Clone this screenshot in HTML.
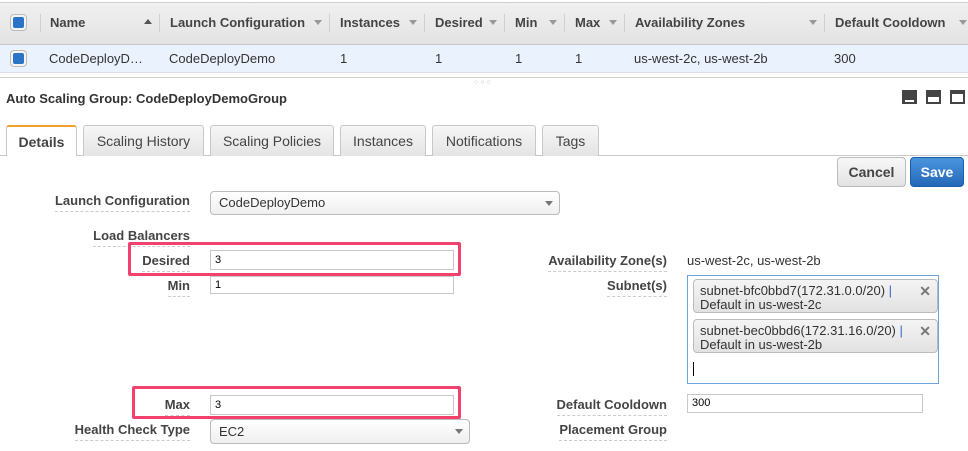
<!DOCTYPE html>
<html><head><style>
*{box-sizing:border-box;margin:0;padding:0}
body{width:968px;height:451px;overflow:hidden;background:#fff;font-family:"Liberation Sans",Arial,sans-serif;color:#333;position:relative;font-size:13px}
.a{position:absolute;white-space:nowrap}
.h{font-weight:bold;color:#444;font-size:13px;top:15px}
.sep{position:absolute;top:14px;width:1px;height:18px;background:#d0d0d0}
.arr{position:absolute;top:20px;width:0;height:0;border-left:4px solid transparent;border-right:4px solid transparent;border-top:5px solid #999}
.cb{position:absolute;width:17px;height:17px;border:1px solid #bbb;border-radius:4px;background:#f4f4f4}
.cb i{position:absolute;left:2px;top:2px;width:11px;height:11px;border-radius:2px;background:#2a73c7}
.tab{position:absolute;top:125px;height:31px;border:1px solid #c8c8c8;border-bottom:none;border-radius:3px 3px 0 0;background:linear-gradient(#f6f6f6,#e4e4e4);font-size:14px;color:#444;text-align:center;line-height:30px}
.lb{position:absolute;font-weight:bold;font-size:13px;color:#444;text-align:right;border-bottom:1px dashed #ccc;padding-bottom:3px}
.in{position:absolute;border:1px solid #c8c8c8;background:#fff;font-size:11px;padding-left:4px;color:#000}
.sel{position:absolute;border:1px solid #bbb;border-radius:4px;background:linear-gradient(#fff,#efefef);font-size:13px;padding-left:8px;color:#333}
.sel:after{content:"";position:absolute;right:6px;top:9px;border-left:4px solid transparent;border-right:4px solid transparent;border-top:5px solid #777}
.pink{position:absolute;border:3px solid #f2416f;border-radius:2px}
.tok{position:absolute;left:5px;width:245px;height:34px;border:1px solid #bbb;border-radius:4px;background:linear-gradient(#f4f4f4,#e2e2e2);font-size:13px;line-height:14px;padding:4px 0 0 6px;color:#333}
.tok b{position:absolute;right:6px;top:4px;color:#777;font-size:14px}
</style></head><body>
<div class="a" style="left:0;top:2px;width:968px;height:43px;background:linear-gradient(#f0f0f0,#e3e3e3);border-top:1px solid #ccc;border-bottom:1px solid #c8c8c8"></div>
<div class="cb" style="left:10px;top:14px"><i></i></div>
<div class="sep" style="left:40px"></div>
<div class="a h" style="left:50px">Name</div>
<div class="a" style="left:144px;top:19px;border-left:4px solid transparent;border-right:4px solid transparent;border-bottom:5px solid #555"></div>
<div class="sep" style="left:159px"></div>
<div class="a h" style="left:170px">Launch Configuration</div><div class="arr" style="left:314px"></div>
<div class="sep" style="left:329px"></div>
<div class="a h" style="left:340px">Instances</div><div class="arr" style="left:409px"></div>
<div class="sep" style="left:424px"></div>
<div class="a h" style="left:435px">Desired</div><div class="arr" style="left:489px"></div>
<div class="sep" style="left:504px"></div>
<div class="a h" style="left:515px">Min</div><div class="arr" style="left:549px"></div>
<div class="sep" style="left:564px"></div>
<div class="a h" style="left:575px">Max</div><div class="arr" style="left:609px"></div>
<div class="sep" style="left:624px"></div>
<div class="a h" style="left:635px">Availability Zones</div><div class="arr" style="left:809px"></div>
<div class="sep" style="left:824px"></div>
<div class="a h" style="left:835px">Default Cooldown</div><div class="arr" style="left:959px"></div>
<div class="a" style="left:0;top:45px;width:968px;height:28px;background:#eaf2fd;border-bottom:1px solid #dde"></div>
<div class="cb" style="left:10px;top:50px"><i></i></div>
<div class="a" style="left:49px;top:51px">CodeDeployD…</div>
<div class="a" style="left:169px;top:51px">CodeDeployDemo</div>
<div class="a" style="left:340px;top:51px">1</div>
<div class="a" style="left:435px;top:51px">1</div>
<div class="a" style="left:515px;top:51px">1</div>
<div class="a" style="left:575px;top:51px">1</div>
<div class="a" style="left:634px;top:51px">us-west-2c, us-west-2b</div>
<div class="a" style="left:834px;top:51px">300</div>
<div class="a" style="left:0;top:77px;width:968px;height:1px;background:#ccc"></div>
<div class="a" style="left:474px;top:79px;font-size:7px;color:#bbb;letter-spacing:2px">○○○</div>
<div class="a" style="left:6px;top:91px;font-weight:bold;font-size:13px;color:#333">Auto Scaling Group: CodeDeployDemoGroup</div>
<div class="a" style="left:902px;top:90px;width:15px;height:14px;background:#444"><div style="position:absolute;left:3px;bottom:2px;width:9px;height:2px;background:#fff"></div></div>
<div class="a" style="left:926px;top:90px;width:15px;height:14px;background:#444"><div style="position:absolute;left:2px;bottom:2px;width:11px;height:5px;background:#fff"></div></div>
<div class="a" style="left:950px;top:90px;width:15px;height:14px;background:#444"><div style="position:absolute;left:2px;bottom:2px;width:11px;height:8px;background:#fff"></div></div>
<div class="a" style="left:0;top:155px;width:968px;height:1px;background:#c8c8c8"></div>
<div class="tab" style="left:6px;width:71px;height:31px;background:#fff;border-top:2px solid #f0a030;font-weight:bold;z-index:2">Details</div>
<div class="tab" style="left:83px;width:121px">Scaling History</div>
<div class="tab" style="left:210px;width:124px">Scaling Policies</div>
<div class="tab" style="left:340px;width:86px">Instances</div>
<div class="tab" style="left:432px;width:104px">Notifications</div>
<div class="tab" style="left:542px;width:57px">Tags</div>
<div class="a" style="left:837px;top:157px;width:69px;height:30px;border:1px solid #bbb;border-radius:4px;background:linear-gradient(#f8f8f8,#e2e2e2);font-weight:bold;font-size:14px;color:#444;text-align:center;line-height:28px">Cancel</div>
<div class="a" style="left:910px;top:157px;width:54px;height:30px;border:1px solid #1a5fa8;border-radius:4px;background:linear-gradient(#4a95de,#2468b8);font-weight:bold;font-size:14px;color:#fff;text-align:center;line-height:28px">Save</div>

<div class="lb" style="right:778px;top:193px">Launch Configuration</div>
<div class="sel" style="left:210px;top:191px;width:350px;height:24px;line-height:22px">CodeDeployDemo</div>
<div class="lb" style="right:778px;top:228px">Load Balancers</div>
<div class="pink" style="left:128px;top:242px;width:333px;height:34px"></div>
<div class="lb" style="right:778px;top:253px">Desired</div>
<div class="in" style="left:210px;top:250px;width:244px;height:20px;line-height:18px">3</div>
<div class="lb" style="right:778px;top:278px">Min</div>
<div class="in" style="left:210px;top:276px;width:244px;height:18px;line-height:16px">1</div>
<div class="pink" style="left:132px;top:386px;width:329px;height:33px"></div>
<div class="lb" style="right:778px;top:397px">Max</div>
<div class="in" style="left:210px;top:395px;width:244px;height:20px;line-height:18px">3</div>
<div class="lb" style="right:778px;top:422px">Health Check Type</div>
<div class="sel" style="left:210px;top:419px;width:260px;height:25px;line-height:23px">EC2</div>

<div class="lb" style="right:301px;top:253px">Availability Zone(s)</div>
<div class="a" style="left:687px;top:253px">us-west-2c, us-west-2b</div>
<div class="lb" style="right:301px;top:278px">Subnet(s)</div>
<div class="a" style="left:687px;top:275px;width:252px;height:109px;border:1px solid #6fa3e0;background:#fff">
<div class="tok" style="top:3px">subnet-bfc0bbd7(172.31.0.0/20) <span style="color:#36c">|</span><br>Default in us-west-2c<b>✕</b></div>
<div class="tok" style="top:43px">subnet-bec0bbd6(172.31.16.0/20) <span style="color:#36c">|</span><br>Default in us-west-2b<b>✕</b></div>
<div style="position:absolute;left:5px;top:86px;width:1px;height:14px;background:#000"></div>
</div>
<div class="lb" style="right:301px;top:397px">Default Cooldown</div>
<div class="in" style="left:687px;top:394px;width:236px;height:19px;line-height:17px">300</div>
<div class="lb" style="right:301px;top:422px">Placement Group</div>
</body></html>
